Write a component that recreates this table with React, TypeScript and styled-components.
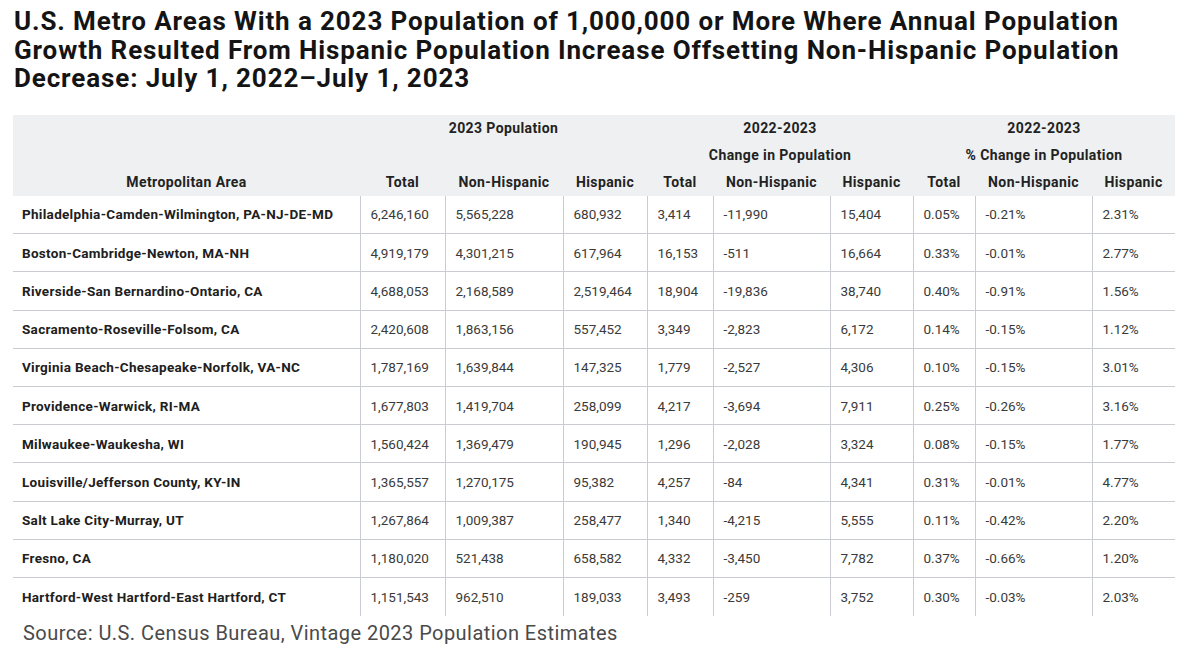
import React from "react";
import styled, { createGlobalStyle } from "styled-components";

const Global = createGlobalStyle`
  html, body { margin: 0; padding: 0; background: #ffffff; }
  body { font-family: Roboto, "Liberation Sans", Arial, sans-serif; color: #222; }
`;

const Page = styled.div`
  width: 1202px;
  height: 664px;
  padding: 7px 0 0 13px;
  box-sizing: border-box;
  overflow: hidden;
`;

const Title = styled.h1`
  margin: 0 0 22px 1px;
  font-family: Roboto, "Liberation Sans", Arial, sans-serif;
  font-size: 26px;
  line-height: 28.5px;
  font-weight: 700;
  color: #141414;
  letter-spacing: 0.88px;
`;

const Table = styled.table`
  border-collapse: collapse;
  table-layout: fixed;
  width: 1162px;
  font-size: 13px;
`;

const HeadRow = styled.tr<{ $h: number }>`
  background: #eef0f2;
  height: ${(p) => p.$h}px;
`;

const Th = styled.th`
  padding: 0;
  font-weight: 700;
  font-size: 14px;
  letter-spacing: 0.4px;
  color: #222;
  text-align: center;
  vertical-align: middle;
  white-space: nowrap;
`;

const Row = styled.tr`
  height: 38.2px;
  & + & td { border-top: 1.5px solid #c9cdd1; }
`;

const Td = styled.td<{ $name?: boolean; $last?: boolean }>`
  padding: 0 0 0 ${(p) => (p.$name ? 9 : 10)}px;
  font-weight: ${(p) => (p.$name ? 700 : 400)};
  font-size: 13.5px;
  letter-spacing: ${(p) => (p.$name ? 0.3 : 0)}px;
  color: ${(p) => (p.$name ? "#202020" : "#3a3a3a")};
  text-align: left;
  vertical-align: middle;
  white-space: nowrap;
  border-right: ${(p) => (p.$last ? "none" : "1.5px solid #c9cdd1")};
`;

const Source = styled.div`
  margin: 5px 0 0 10px;
  font-size: 20px;
  line-height: 24px;
  letter-spacing: 0.45px;
  color: #4a4a4a;
  font-weight: 400;
`;

const widths = [347, 85, 118, 84, 66, 117, 83, 62, 117, 83];

const rows: string[][] = [
  ["Philadelphia-Camden-Wilmington, PA-NJ-DE-MD", "6,246,160", "5,565,228", "680,932", "3,414", "-11,990", "15,404", "0.05%", "-0.21%", "2.31%"],
  ["Boston-Cambridge-Newton, MA-NH", "4,919,179", "4,301,215", "617,964", "16,153", "-511", "16,664", "0.33%", "-0.01%", "2.77%"],
  ["Riverside-San Bernardino-Ontario, CA", "4,688,053", "2,168,589", "2,519,464", "18,904", "-19,836", "38,740", "0.40%", "-0.91%", "1.56%"],
  ["Sacramento-Roseville-Folsom, CA", "2,420,608", "1,863,156", "557,452", "3,349", "-2,823", "6,172", "0.14%", "-0.15%", "1.12%"],
  ["Virginia Beach-Chesapeake-Norfolk, VA-NC", "1,787,169", "1,639,844", "147,325", "1,779", "-2,527", "4,306", "0.10%", "-0.15%", "3.01%"],
  ["Providence-Warwick, RI-MA", "1,677,803", "1,419,704", "258,099", "4,217", "-3,694", "7,911", "0.25%", "-0.26%", "3.16%"],
  ["Milwaukee-Waukesha, WI", "1,560,424", "1,369,479", "190,945", "1,296", "-2,028", "3,324", "0.08%", "-0.15%", "1.77%"],
  ["Louisville/Jefferson County, KY-IN", "1,365,557", "1,270,175", "95,382", "4,257", "-84", "4,341", "0.31%", "-0.01%", "4.77%"],
  ["Salt Lake City-Murray, UT", "1,267,864", "1,009,387", "258,477", "1,340", "-4,215", "5,555", "0.11%", "-0.42%", "2.20%"],
  ["Fresno, CA", "1,180,020", "521,438", "658,582", "4,332", "-3,450", "7,782", "0.37%", "-0.66%", "1.20%"],
  ["Hartford-West Hartford-East Hartford, CT", "1,151,543", "962,510", "189,033", "3,493", "-259", "3,752", "0.30%", "-0.03%", "2.03%"],
];

const sub = ["Total", "Non-Hispanic", "Hispanic"];

export default function App() {
  return (
    <Page>
      <Global />
      <Title>
        U.S. Metro Areas With a 2023 Population of 1,000,000 or More Where Annual Population
        <br />
        Growth Resulted From Hispanic Population Increase Offsetting Non-Hispanic Population
        <br />
        Decrease: July 1, 2022–July 1, 2023
      </Title>
      <Table>
        <colgroup>
          {widths.map((w, i) => (
            <col key={i} style={{ width: w }} />
          ))}
        </colgroup>
        <thead>
          <HeadRow $h={27}>
            <Th />
            <Th colSpan={3}>2023 Population</Th>
            <Th colSpan={3}>2022-2023</Th>
            <Th colSpan={3}>2022-2023</Th>
          </HeadRow>
          <HeadRow $h={27}>
            <Th />
            <Th colSpan={3} />
            <Th colSpan={3}>Change in Population</Th>
            <Th colSpan={3}>% Change in Population</Th>
          </HeadRow>
          <HeadRow $h={27}>
            <Th>Metropolitan Area</Th>
            {[0, 1, 2].flatMap((g) => sub.map((s) => <Th key={`${g}-${s}`}>{s}</Th>))}
          </HeadRow>
        </thead>
        <tbody>
          {rows.map((r) => (
            <Row key={r[0]}>
              {r.map((c, i) => (
                <Td key={i} $name={i === 0} $last={i === r.length - 1}>
                  {c}
                </Td>
              ))}
            </Row>
          ))}
        </tbody>
      </Table>
      <Source>Source: U.S. Census Bureau, Vintage 2023 Population Estimates</Source>
    </Page>
  );
}
